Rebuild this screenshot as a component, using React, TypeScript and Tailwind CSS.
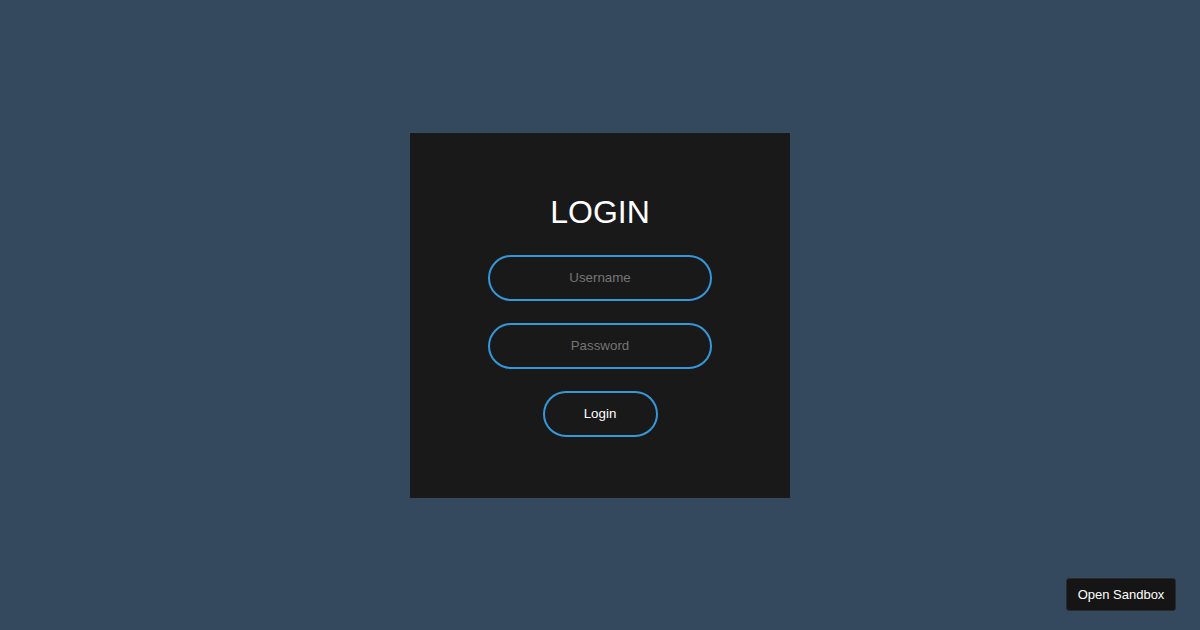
import React from "react";

export default function App() {
  return (
    <div
      className="relative flex h-screen w-full items-center justify-center bg-[#34495e]"
      style={{ fontFamily: '"Liberation Sans", Arial, sans-serif' }}
    >
      {/* login box */}
      <form
        className="flex w-[380px] flex-col items-center bg-[#191919] pt-[61px] pb-[61px]"
        onSubmit={(e) => e.preventDefault()}
      >
        <h1 className="text-[32px] leading-[37px] font-medium uppercase text-white">
          Login
        </h1>
        <input
          type="text"
          placeholder="Username"
          className="mt-[24px] h-[46px] w-[224px] rounded-full border-2 border-[#3498db] bg-transparent px-[10px] text-center text-[13.33px] text-white outline-none placeholder:text-[#757575]"
        />
        <input
          type="password"
          placeholder="Password"
          className="mt-[22px] h-[46px] w-[224px] rounded-full border-2 border-[#3498db] bg-transparent px-[10px] text-center text-[13.33px] text-white outline-none placeholder:text-[#757575]"
        />
        <button
          type="submit"
          className="mt-[22px] h-[46px] w-[115px] rounded-full border-2 border-[#3498db] bg-transparent text-[13.33px] text-white"
        >
          Login
        </button>
      </form>

      {/* sandbox button */}
      <button className="absolute right-[24px] bottom-[19px] h-[33px] w-[110px] rounded-[3px] border border-[#2a2a2a] bg-[#151515] text-[13px] text-white">
        Open Sandbox
      </button>
    </div>
  );
}
